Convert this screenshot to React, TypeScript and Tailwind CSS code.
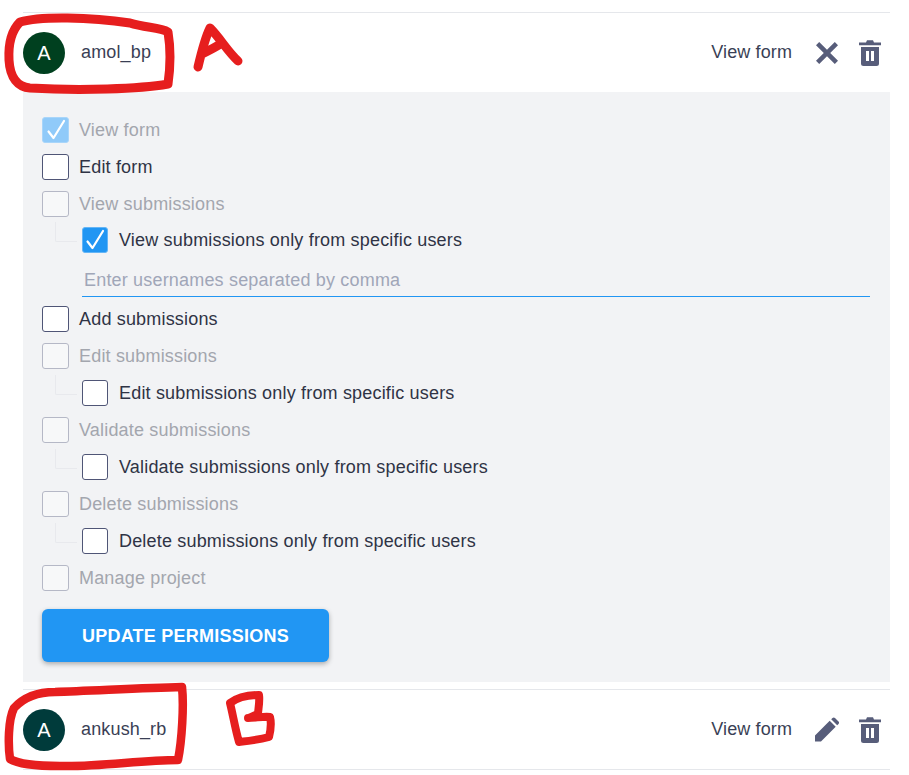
import React from "react";

const Check = () => (
  <svg viewBox="0 0 24 24" className="w-[24px] h-[24px]" fill="none" stroke="white" strokeWidth="2.2" strokeLinecap="round" strokeLinejoin="round">
    <path d="M4.5 13.5 L9.5 20 L20 3" />
  </svg>
);

function Box({ state, sub }: { state: "on" | "off" | "dis" | "disOn"; sub?: boolean }) {
  const cls =
    state === "on"
      ? "bg-[#2196f3] border-[#64b5f6]"
      : state === "disOn"
      ? "bg-[#90caf9] border-[#a8d5fa]"
      : state === "dis"
      ? "bg-[#f7f8f9] border-[#b5b8c6]"
      : "bg-white border-[#4f5576]";
  return (
    <span className={`${sub ? "w-[26px]" : "w-[27px]"} h-[26px] shrink-0 rounded-[3px] border flex items-center justify-center ${cls}`}>
      {(state === "on" || state === "disOn") && <Check />}
    </span>
  );
}

function Row({ label, state, sub, tight }: { label: string; state: "on" | "off" | "dis" | "disOn"; sub?: boolean; tight?: boolean }) {
  const disabled = state === "dis" || state === "disOn";
  return (
    <div className={`relative flex items-center h-[26px] mb-[11px] ${sub ? "ml-[40px]" : ""} ${tight ? "mt-[-1px]" : ""}`}>
      {sub && <span className="absolute left-[-27px] top-[-5px] w-[22px] h-[20px] border-l border-b border-[#e8e9ed] rounded-bl-[2px]" />}
      <Box state={state} sub={sub} />
      <span className={`${sub ? "ml-[11px]" : "ml-[10px]"} text-[18px] leading-[26px] tracking-[0.18px] ${disabled ? "text-[#a3a6ae]" : "text-[#2f3345]"}`}>{label}</span>
    </div>
  );
}

const CloseIcon = () => (
  <svg viewBox="0 0 22 22" className="w-[22px] h-[22px]" fill="#575d7a">
    <path d="M3.2 0 L11 7.8 L18.8 0 L22 3.2 L14.2 11 L22 18.8 L18.8 22 L11 14.2 L3.2 22 L0 18.8 L7.8 11 L0 3.2 Z" />
  </svg>
);

const TrashIcon = () => (
  <svg viewBox="0 0 22 27" className="w-[22px] h-[27px]" fill="#575d7a">
    <path fillRule="evenodd" d="M2 8h18v16.5a2.5 2.5 0 0 1-2.5 2.5h-13A2.5 2.5 0 0 1 2 24.5V8zM7 12v10h3V12H7zm5 0v10h3V12h-3zM0 3.5h7L8 1.2h6l1 2.3h7v2.7H0V3.5z" />
  </svg>
);

const PencilIcon = () => (
  <svg viewBox="0 0 24 24" className="w-[24px] h-[25px]" fill="#575d7a">
    <path d="M0 24v-6L14.7 3.3l6 6L6 24H0zM16.2 1.8 17.5.5a1.8 1.8 0 0 1 2.5 0l3.5 3.5a1.8 1.8 0 0 1 0 2.5l-1.3 1.3-6-6z" />
  </svg>
);

function UserRow({ name, color, icon }: { name: string; color: string; icon: React.ReactNode }) {
  return (
    <div className="flex items-center justify-between h-[80px] border-t border-[#e5e7eb]">
      <div className="flex items-center">
        <span className={`w-[42px] h-[42px] rounded-full flex items-center justify-center text-white text-[20px] ${color}`}>A</span>
        <span className="ml-[16px] text-[18px] tracking-[0.15px] text-[#3a3f55]">{name}</span>
      </div>
      <div className="flex items-center">
        <span className="text-[18px] tracking-[0.12px] text-[#3a3f55]">View form</span>
        <span className="ml-[23px] w-[24px] flex justify-center">{icon}</span>
        <span className="ml-[20px] mr-[9px]"><TrashIcon /></span>
      </div>
    </div>
  );
}

export default function App() {
  return (
    <div className="relative w-[909px] h-[775px] bg-white overflow-hidden font-['Liberation_Sans',sans-serif]">
      <div className="ml-[23px] mr-[19px] pt-[12px]">
        <UserRow name="amol_bp" color="bg-[#00401f]" icon={<CloseIcon />} />
        <div className="bg-[#f2f3f5] h-[590px] pt-[25px] pl-[19px] pr-[20px]">
          <Row label="View form" state="disOn" />
          <Row label="Edit form" state="off" />
          <Row label="View submissions" state="dis" />
          <Row label="View submissions only from specific users" state="on" sub tight />
          <div className="ml-[40px] mt-[-1px] mb-[5px] h-[34px] border-b border-[#2196f3] text-[18px] leading-[34px] pl-[2px] tracking-[0.18px] text-[#a0a6b8]">
            Enter usernames separated by comma
          </div>
          <div className="h-[4px]" />
          <Row label="Add submissions" state="off" />
          <Row label="Edit submissions" state="dis" />
          <Row label="Edit submissions only from specific users" state="off" sub />
          <Row label="Validate submissions" state="dis" />
          <Row label="Validate submissions only from specific users" state="off" sub />
          <Row label="Delete submissions" state="dis" />
          <Row label="Delete submissions only from specific users" state="off" sub />
          <Row label="Manage project" state="dis" />
          <button className="mt-[7px] w-[287px] h-[53px] pt-[1px] rounded-[6px] bg-[#2196f3] text-white text-[18px] tracking-[0.25px] font-bold uppercase shadow-[0_2px_5px_rgba(0,0,0,0.3)]">
            Update permissions
          </button>
        </div>
        <div className="h-[7px]" />
        <UserRow name="ankush_rb" color="bg-[#003b3b]" icon={<PencilIcon />} />
        <div className="border-t border-[#e5e7eb]" />
      </div>
      <svg className="absolute inset-0 pointer-events-none" width="909" height="775" fill="none" stroke="#e61e1e" strokeWidth="9" strokeLinecap="round" strokeLinejoin="round">
        <path d="M20 22 C40 16 90 17 130 23 C145 28 160 27 168 32 C171 50 170 70 168 84 C140 89 80 91 30 88 C18 87 10 78 9 60 C8 40 14 28 20 22 Z" />
        <path d="M198 67 C202 50 205 38 210 28 C220 38 228 52 238 61 M202 54 C210 50 216 47 222 43" />
        <path strokeWidth="8.5" d="M14 708 C25 696 40 692 55 692 C90 691 140 688 182 687 C184 705 182 740 178 760 C140 760 100 767 60 766 C40 766 20 765 10 759 C8 745 8 720 14 708 Z" />
        <path strokeWidth="8" d="M230 703 C238 697 250 695 259 695 C260 702 258 710 258 714 C252 716 250 718 248 718 C255 718 265 716 270 717 C272 725 270 733 269 737 C258 740 248 741 239 742 C235 728 233 715 230 703 Z" />
      </svg>
    </div>
  );
}
